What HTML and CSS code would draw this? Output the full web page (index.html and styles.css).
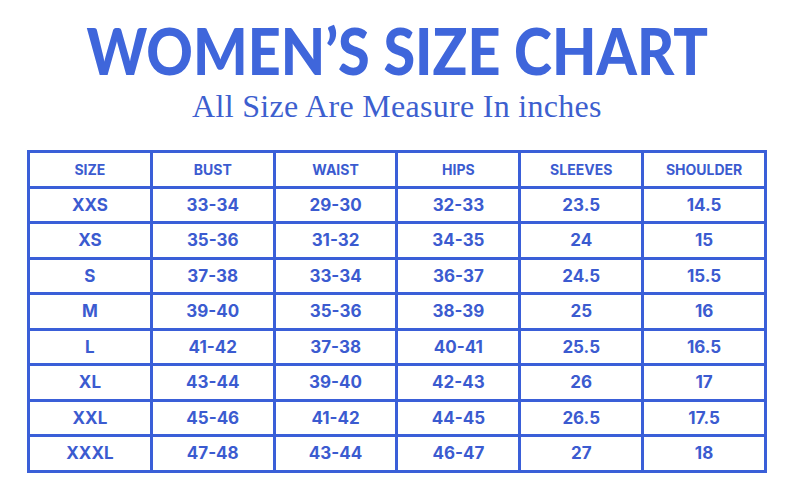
FILE: index.html
```html
<!DOCTYPE html>
<html>
<head>
<meta charset="utf-8">
<link rel="stylesheet" href="styles.css">
</head>
<body>
<div class="page">
  <h1 class="title">WOMEN’S SIZE CHART</h1>
  <p class="subtitle">All Size Are Measure In inches</p>
  <table class="chart">
    <thead>
      <tr><th>SIZE</th><th>BUST</th><th>WAIST</th><th>HIPS</th><th>SLEEVES</th><th>SHOULDER</th></tr>
    </thead>
    <tbody>
      <tr><td>XXS</td><td>33-34</td><td>29-30</td><td>32-33</td><td>23.5</td><td>14.5</td></tr>
      <tr><td>XS</td><td>35-36</td><td>31-32</td><td>34-35</td><td>24</td><td>15</td></tr>
      <tr><td>S</td><td>37-38</td><td>33-34</td><td>36-37</td><td>24.5</td><td>15.5</td></tr>
      <tr><td>M</td><td>39-40</td><td>35-36</td><td>38-39</td><td>25</td><td>16</td></tr>
      <tr><td>L</td><td>41-42</td><td>37-38</td><td>40-41</td><td>25.5</td><td>16.5</td></tr>
      <tr><td>XL</td><td>43-44</td><td>39-40</td><td>42-43</td><td>26</td><td>17</td></tr>
      <tr><td>XXL</td><td>45-46</td><td>41-42</td><td>44-45</td><td>26.5</td><td>17.5</td></tr>
      <tr><td>XXXL</td><td>47-48</td><td>43-44</td><td>46-47</td><td>27</td><td>18</td></tr>
    </tbody>
  </table>
</div>
</body>
</html>
```
FILE: styles.css
```css
html, body {
  margin: 0;
  padding: 0;
  background: #ffffff;
}
.page {
  width: 794px;
  height: 485px;
  box-sizing: border-box;
  padding-top: 17px;
  display: flex;
  flex-direction: column;
  align-items: center;
  color: #3d62d8;
}
.title {
  margin: 0;
  font-family: Lato, "DejaVu Sans", sans-serif;
  font-weight: 900;
  font-size: 65px;
  line-height: 66px;
  letter-spacing: 0;
  color: #3f66db;
  transform: scaleX(0.885);
  white-space: nowrap;
}
.subtitle {
  margin: 0;
  margin-top: 6px;
  font-family: "Liberation Serif", serif;
  font-size: 32px;
  line-height: 34px;
  letter-spacing: 0.3px;
  color: #3d5fcf;
}
.chart {
  margin-top: 27px;
  margin-left: 0;
  width: 740px;
  border-collapse: collapse;
  table-layout: fixed;
  font-family: Inter, "DejaVu Sans", sans-serif;
  font-weight: 700;
  color: #3b5bd0;
}
.chart th, .chart td {
  border: 3px solid #3a5fd8;
  text-align: center;
  padding: 0;
  height: 32.5px;
}
.chart th {
  font-size: 14px;
}
.chart td {
  font-size: 17px;
}
```
